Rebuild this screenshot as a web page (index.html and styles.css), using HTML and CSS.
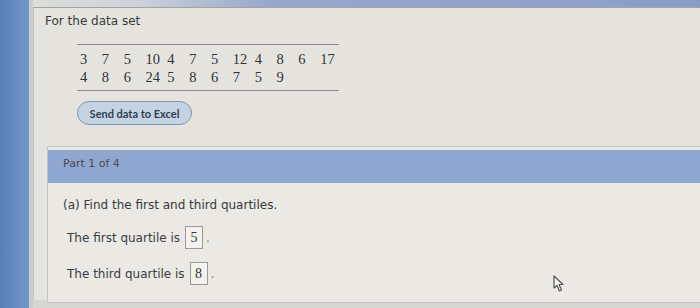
FILE: index.html
```html
<!DOCTYPE html>
<html>
<head>
<meta charset="utf-8">
<link rel="stylesheet" href="styles.css">
</head>
<body>
<div class="side"></div>
<div class="main">
  <div class="topbar"></div>
  <div class="panel">
    <div class="intro">For the data set</div>
    <div class="data">
      <span>3</span><span>7</span><span>5</span><span>10</span><span>4</span><span>7</span><span>5</span><span>12</span><span>4</span><span>8</span><span>6</span><span>17</span>
      <span>4</span><span>8</span><span>6</span><span>24</span><span>5</span><span>8</span><span>6</span><span>7</span><span>5</span><span>9</span><span></span><span></span>
    </div>
    <button class="excel">Send data to Excel</button>
    <div class="part">
      <div class="part-head">Part 1 of 4</div>
      <div class="part-body">
        <div class="question">(a) Find the first and third quartiles.</div>
        <div class="answer">The first quartile is <span class="box">5</span><span class="dot">.</span></div>
        <div class="answer third">The third quartile is <span class="box">8</span><span class="dot">.</span></div>
        <svg class="cursor" width="12" height="18" viewBox="0 0 12 18"><path d="M1 1 L1 13 L4 10.5 L6.5 16 L8.5 15 L6 9.5 L10 9.5 Z" fill="#f4f4f0" stroke="#555" stroke-width="1.2" stroke-linejoin="round"/></svg>
      </div>
    </div>
  </div>
</div>
</body>
</html>
```
FILE: styles.css
```css
html, body { margin: 0; padding: 0; }
body {
  width: 700px; height: 308px; overflow: hidden;
  display: flex;
  background: #d6d7d4;
  font-family: "DejaVu Sans", Verdana, sans-serif;
  color: #3d3d3d;
}
.side {
  width: 29px;
  background: linear-gradient(to right, #5a80ba, #7396c9);
  border-right: 4px solid #cbcdcd;
}
.main { flex: 1; display: flex; flex-direction: column; }
.topbar {
  height: 7px;
  background: linear-gradient(to right, #dcdcda 0%, #cfd3da 15%, #97a8cc 35%, #8a9dca 100%);
  border-bottom: 1px solid #a3a3a3;
}
.panel {
  height: 292px;
  background: #e4e3de;
  border-left: 1px solid #c2c2c2;
  padding: 6px 0 0 11px;
  box-sizing: border-box;
}
.intro { font-size: 12px; line-height: 14px; color: #3a3a3a; }
.data {
  margin: 16px 0 0 32px;
  width: 262px;
  display: grid;
  grid-template-columns: repeat(12, 1fr);
  grid-auto-rows: 18px;
  border-top: 1px solid #8d8d8d;
  border-bottom: 1px solid #8d8d8d;
  padding: 5px 0 4px;
  font-family: "Liberation Serif", "Times New Roman", serif;
  font-size: 14.5px;
  line-height: 18px;
  color: #333;
}
.data span { padding-left: 3px; }
.excel {
  display: block;
  margin: 10px 0 0 32px;
  width: 115px; height: 24px;
  border: 1px solid #8796ac;
  border-radius: 12px;
  background: #c4d2e2;
  font-family: Lato, "Open Sans", sans-serif;
  font-weight: bold;
  font-size: 11px;
  color: #2f3f55;
  padding: 0;
}
.part {
  margin: 21px 0 0 2px;
  border: 1px solid #c3c3c0;
  border-right: none;
  background: #eae9e4;
  height: 152px;
  padding-top: 3px;
}
.part-head {
  height: 33px;
  background: #8fa7d0;
  font-size: 11px;
  line-height: 28px;
  padding-left: 15px;
  color: #4c4c4c;
}
.part-body { position: relative; padding: 15px 0 0 15px; }
.question { font-size: 12px; line-height: 14px; color: #3a3a3a; }
.answer {
  margin: 14px 0 0 4px;
  font-size: 12px;
  line-height: 22px;
  display: flex; align-items: center;
  color: #3c3c3c;
}
.answer.third { margin-top: 13px; }
.box {
  display: inline-block;
  width: 16px; height: 21px;
  border: 1px solid #9a9a9a;
  background: #f3f2ee;
  margin-left: 5px;
  text-align: center;
  font-family: "Liberation Serif", serif;
  font-size: 14px; line-height: 21px;
  color: #333;
}
.dot { margin-left: 3px; color: #777; }
.cursor { position: absolute; left: 505px; top: 92px; }
```
